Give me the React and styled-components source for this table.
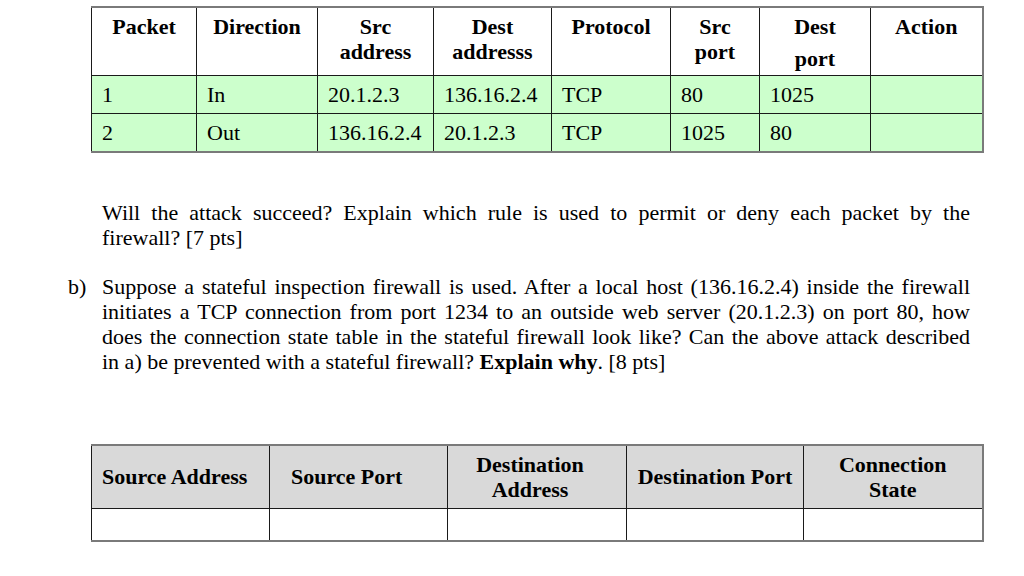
import React from 'react'
import styled, { createGlobalStyle } from 'styled-components'

const Global = createGlobalStyle`
  body {
    margin: 0;
    background: #fff;
    font-family: "Liberation Serif", "Times New Roman", serif;
    color: #000;
  }
`
const Page = styled.div`
  width: 1024px;
  height: 576px;
  box-sizing: border-box;
  padding: 6px 0 0 68px;
  overflow: hidden;
`
const Column = styled.div`
  width: 914px;
  display: flex;
  flex-direction: column;
`
const Table = styled.table`
  margin-left: 23px;
  width: 891px;
  border-collapse: collapse;
  table-layout: fixed;
  border-top: 2px solid #7a7a7a;
  border-right: 2px solid #7a7a7a;
  border-bottom: 2px solid #7a7a7a;
  font-size: 22px;
  margin-top: ${props => props.$mt || 0}px;
`
const Head = styled.th`
  border: 1px solid #1a1a1a;
  background: ${props => props.$bg || '#fff'};
  font-weight: bold;
  text-align: ${props => props.$align || 'center'};
  padding: ${props => props.$pad || '6px 4px 0 4px'};
  vertical-align: ${props => props.$valign || 'top'};
  line-height: 25px;
  height: ${props => props.$h}px;
  box-sizing: border-box;
`
const Gap = styled.span`
  display: block;
  height: ${props => props.$h}px;
`
const Cell = styled.td`
  border: 1px solid #1a1a1a;
  background: ${props => props.$bg || '#fff'};
  padding: 0 0 0 10px;
  height: ${props => props.$h}px;
  vertical-align: middle;
  line-height: 25px;
  white-space: nowrap;
`
const Question = styled.div`
  display: flex;
  font-size: 22px;
  line-height: 25px;
  margin-top: ${props => props.$mt}px;
  padding-right: 12px;
`
const Marker = styled.div`
  width: 34px;
  flex: none;
`
const Body = styled.div`
  flex: 1;
`
const Line = styled.span`
  display: block;
  text-align: ${props => props.$last ? 'left' : 'justify'};
  text-align-last: ${props => props.$last ? 'left' : 'justify'};
  white-space: nowrap;
`

const packets = [
  ['1', 'In', '20.1.2.3', '136.16.2.4', 'TCP', '80', '1025', ''],
  ['2', 'Out', '136.16.2.4', '20.1.2.3', 'TCP', '1025', '80', ''],
]
const widths = [105, 121, 116, 118, 119, 89, 111, 112]

function App() {
  return (
    <Page>
      <Global />
      <Column>
        <Table>
          <colgroup>
            {widths.map((w, i) => <col key={i} style={{ width: w }} />)}
          </colgroup>
          <thead>
            <tr>
              <Head $h={68}>Packet</Head>
              <Head $h={68}>Direction</Head>
              <Head $h={68}>Src<br />address</Head>
              <Head $h={68}>Dest<br />addresss</Head>
              <Head $h={68}>Protocol</Head>
              <Head $h={68}>Src<br />port</Head>
              <Head $h={68}>Dest<Gap $h={7} />port</Head>
              <Head $h={68}>Action</Head>
            </tr>
          </thead>
          <tbody>
            {packets.map((row, r) => (
              <tr key={r}>
                {row.map((v, i) => <Cell key={i} $h={37} $bg="#ccffcc">{v}</Cell>)}
              </tr>
            ))}
          </tbody>
        </Table>

        <Question $mt={47}>
          <Marker />
          <Body>
            <Line>Will the attack succeed? Explain which rule is used to permit or deny each packet by the</Line>
            <Line $last>firewall? [7 pts]</Line>
          </Body>
        </Question>

        <Question $mt={24}>
          <Marker>b)</Marker>
          <Body>
            <Line>Suppose a stateful inspection firewall is used. After a local host (136.16.2.4) inside the firewall</Line>
            <Line>initiates a TCP connection from port 1234 to an outside web server (20.1.2.3) on port 80, how</Line>
            <Line>does the connection state table in the stateful firewall look like? Can the above attack described</Line>
            <Line $last>in a) be prevented with a stateful firewall? <b>Explain why</b>. [8 pts]</Line>
          </Body>
        </Question>

        <Table $mt={70}>
          <colgroup>
            {[178, 178, 179, 177, 179].map((w, i) => <col key={i} style={{ width: w }} />)}
          </colgroup>
          <thead>
            <tr>
              <Head $h={64} $bg="#d9d9d9" $valign="middle" $align="left" $pad="0 0 0 10px">Source Address</Head>
              <Head $h={64} $bg="#d9d9d9" $valign="middle" $align="left" $pad="0 0 0 21px">Source Port</Head>
              <Head $h={64} $bg="#d9d9d9" $valign="middle" $pad="0 14px 0 0">Destination<br />Address</Head>
              <Head $h={64} $bg="#d9d9d9" $valign="middle" $pad="0">Destination Port</Head>
              <Head $h={64} $bg="#d9d9d9" $valign="middle" $pad="0">Connection<br />State</Head>
            </tr>
          </thead>
          <tbody>
            <tr>
              {[0, 1, 2, 3, 4].map(i => <Cell key={i} $h={31} />)}
            </tr>
          </tbody>
        </Table>
      </Column>
    </Page>
  )
}

export default App
